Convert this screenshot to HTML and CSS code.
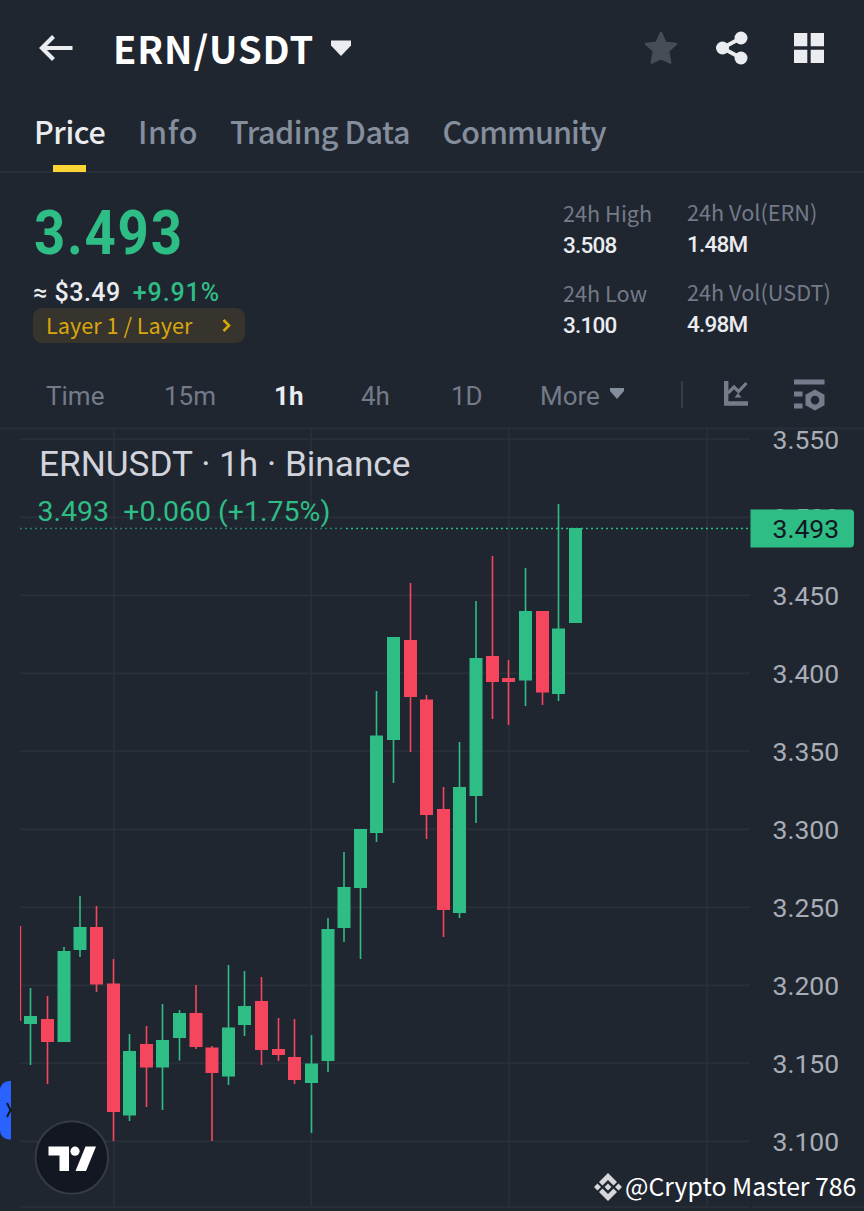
FILE: index.html
```html
<!DOCTYPE html>
<html lang="en">
<head>
  <meta charset="UTF-8">
  <title>ERN/USDT</title>
  <link rel="stylesheet" href="styles.css">
</head>
<body>
  <header class="topbar">
    <svg class="back" width="36" height="30" viewBox="0 0 36 30"><path d="M34.500 15H5M15.500 3.500L4 15l11.500 11.500" fill="none" stroke="#eaecef" stroke-width="4.200"/></svg>
    <h1 class="pair">ERN/USDT</h1>
    <svg class="caret" width="20" height="16" viewBox="0 0 20 16"><path d="M0 .5h20v5L10 16 0 5.500z" fill="#eaecef"/></svg>
    <div class="actions">
      <svg width="34" height="34" viewBox="0 0 34 34"><path d="M17 2l4.300 9.800 10.700 1.100-8 7.300 2.300 11.300L17 27l-9.300 4.500L10 20.200 2 12.900l10.700-1.100z" fill="#474d57" stroke="#474d57" stroke-width="2.500" stroke-linejoin="round"/></svg>
      <svg width="32" height="34" viewBox="0 0 32 34"><path d="M25 7L6.500 17 25 27" fill="none" stroke="#eaecef" stroke-width="4"/><circle cx="25" cy="7" r="6.500" fill="#eaecef"/><circle cx="6.500" cy="17" r="6.500" fill="#eaecef"/><circle cx="25" cy="27" r="6.500" fill="#eaecef"/></svg>
      <svg width="30" height="30" viewBox="0 0 30 30"><path d="M0 0h13.300v13.300H0zM16.700 0H30v13.300H16.700zM0 16.700h13.300V30H0zM16.700 16.700H30V30H16.700z" fill="#eaecef"/></svg>
    </div>
  </header>

  <nav class="tabs">
    <a class="tab active">Price</a>
    <a class="tab tab-info">Info</a>
    <a class="tab tab-data">Trading Data</a>
    <a class="tab tab-comm">Community</a>
  </nav>

  <section class="summary">
    <div class="quote">
      <div class="last">3.493</div>
      <div class="fiat"><span class="usd">≈ $3.49</span><span class="change">+9.91%</span></div>
      <div class="tag"><span>Layer 1 / Layer</span><svg width="9" height="13" viewBox="0 0 9 13"><path d="M1.500 1l5.500 5.500L1.500 12" fill="none" stroke="#d9a60c" stroke-width="2.600"/></svg></div>
    </div>
    <div class="stats">
      <div class="stat-col">
        <div class="label">24h High</div>
        <div class="value">3.508</div>
        <div class="label">24h Low</div>
        <div class="value">3.100</div>
      </div>
      <div class="stat-col right">
        <div class="label">24h Vol(ERN)</div>
        <div class="value">1.48M</div>
        <div class="label">24h Vol(USDT)</div>
        <div class="value">4.98M</div>
      </div>
    </div>
  </section>

  <nav class="intervals">
    <a class="iv-time">Time</a>
    <a class="iv-15m">15m</a>
    <a class="iv-1h active">1h</a>
    <a class="iv-4h">4h</a>
    <a class="iv-1d">1D</a>
    <a class="iv-more">More<svg width="14" height="11" viewBox="0 0 14 11"><path d="M0 0h14v3L7 11 0 3z" fill="#848e9c"/></svg></a>
    <i class="divider"></i>
    <svg class="ic-chart" width="24" height="25" viewBox="0 0 24 25"><path d="M2.200 0v22.500H24" fill="none" stroke="#767c8b" stroke-width="4.400"/><path d="M4 12l6-6 4.500 4.500L22.500 2" fill="none" stroke="#767c8b" stroke-width="3.200"/><path d="M14 12l3.500 4.500h-7z" fill="#767c8b"/></svg>
    <svg class="ic-set" width="31" height="32" viewBox="0 0 31 32"><path d="M0 .5h30.500v5H0zM0 12.500h8.500v5H0zM0 24.500h8.500v5H0z" fill="#767c8b"/><path d="M21 10.500l9.500 5.300v10.500L21 31.600l-9.500-5.300V15.800zm0 6.300a4.300 4.300 0 1 0 0 8.600 4.300 4.300 0 0 0 0-8.600z" fill="#767c8b" fill-rule="evenodd"/></svg>
  </nav>

  <main class="chart">
    <svg id="plot" width="864" height="783" viewBox="0 428 864 783">
      <g id="grid" class="grid"></g>
      <text class="symbol" x="39" y="475.500">ERNUSDT · 1h · Binance</text>
      <text class="legend" x="37.500" y="521" xml:space="preserve">3.493  +0.060 (+1.75%)</text>
      <path class="last-line dim" d="M20 528.500h325"/>
      <path class="last-line" d="M346 528.500h404"/>
      <g id="candles"></g>
      <g id="axis" class="axis"></g>
      <path d="M750.500 509.500H850a4 4 0 0 1 4 4v30a4 4 0 0 1-4 4H750.500z" fill="#2ebd85"/>
      <text class="axis-last" x="772.500" y="538">3.493</text>
      <path d="M11 1081v58.500H9a9 9 0 0 1-9-9v-40.500a9 9 0 0 1 9-9z" fill="#2962ff"/>
      <path d="M7 1103l3.500 7-3.500 7" fill="none" stroke="#131722" stroke-width="2"/>
      <circle cx="71.800" cy="1157.500" r="36.300" fill="#131722" stroke="#363a45" stroke-width="2"/>
      <path d="M48.500 1146.500H69v24.500h-9.500v-15.500h-11zM85.500 1146.500H96L86 1171H75.500z" fill="#fff"/>
      <circle cx="75" cy="1151.200" r="4.600" fill="#fff"/>
      <g class="badge" transform="translate(608 1187)">
        <path d="M0-14L9-5 5.500-1.500 0-7l-5.500 5.500L-9-5zM0 14L9 5 5.500 1.500 0 7l-5.500-5.500L-9 5zM0-3.500L3.500 0 0 3.500-3.500 0zM10.500-3.500L14 0l-3.500 3.500L7 0zM-10.500-3.500L-7 0l-3.500 3.500L-14 0z"/>
      </g>
      <text class="handle" x="625" y="1196">@Crypto Master 786</text>
    </svg>
  </main>
  <script src="chart.js"></script>
</body>
</html>
```
FILE: styles.css
```css
* {
  box-sizing: border-box;
}
body {
  margin: 0;
  width: 864px;
  height: 1211px;
  overflow: hidden;
  background-color: #202630;
  color: #eaecef;
  font-family: "Noto Sans CJK SC", "Noto Sans", sans-serif;
}
svg {
  display: block;
  flex: none;
}
.topbar {
  display: flex;
  align-items: center;
  height: 96px;
  padding: 0 40px 0 38px;
}
.pair {
  width: 201px;
  margin: 0 0 0 39px;
  font-size: 38px;
  line-height: 50px;
  font-weight: 700;
  letter-spacing: 0.9px;
  color: #fff;
  white-space: nowrap;
}
.caret {
  margin-left: 17px;
}
.actions {
  display: flex;
  align-items: center;
  margin-left: auto;
}
.actions svg:nth-child(2) {
  margin: 0 46px 0 38px;
}
.tabs {
  display: flex;
  height: 77px;
  padding-left: 34px;
  border-bottom: 2px solid #292f39;
}
.tab {
  position: relative;
  padding-top: 13px;
  font-size: 30.5px;
  line-height: 44px;
  letter-spacing: -0.4px;
  color: #848e9c;
  font-weight: 500;
  white-space: nowrap;
}
.tab.active {
  width: 104px;
  color: #eaecef;
}
.tab.active::after {
  content: "";
  position: absolute;
  left: 19px;
  bottom: -1px;
  width: 33px;
  height: 7px;
  background-color: #fcd535;
}
.tab-info {
  width: 92px;
  letter-spacing: 0.7px;
}
.tab-data { width: 212.5px; }
.tab-comm { letter-spacing: -0.9px; }

.summary {
  display: flex;
  height: 190px;
  padding-left: 33px;
}
.quote {
  width: 530px;
  font-family: Roboto, sans-serif;
}
.last {
  height: 100px;
  padding-top: 24px;
  padding-left: 1px;
  font-size: 62px;
  line-height: 72px;
  font-weight: 700;
  letter-spacing: 2px;
  color: #2ebd85;
  transform: scaleX(0.88);
  transform-origin: left;
}
.fiat {
  display: flex;
  gap: 12px;
  height: 35px;
  padding-top: 3px;
  font-size: 25px;
  line-height: 33px;
  letter-spacing: 0.5px;
  font-weight: 500;
}
.change {
  letter-spacing: 0.9px;
  color: #2ebd85;
}
.tag {
  display: flex;
  align-items: center;
  justify-content: space-between;
  width: 212px;
  height: 35px;
  padding: 0 14px 0 13px;
  border-radius: 9px;
  background-color: #36342c;
  color: #d9a60c;
  font-family: "Noto Sans CJK SC", sans-serif;
  font-size: 21.7px;
  white-space: nowrap;
}
.tag span {
  padding-bottom: 3px;
}
.stats {
  display: flex;
  padding-top: 26px;
}
.stat-col {
  width: 124px;
  white-space: nowrap;
}
.stat-col.right {
  margin-top: -1px;
}
.label {
  height: 31px;
  font-size: 21.7px;
  line-height: 27px;
  color: #747a88;
}
.value {
  height: 49px;
  padding-top: 1px;
  font-family: Roboto, sans-serif;
  font-size: 22.5px;
  line-height: 29px;
  letter-spacing: -0.8px;
  font-weight: 500;
}
.intervals {
  display: flex;
  height: 67px;
  padding-left: 46px;
  border-bottom: 3px solid #262c36;
  font-family: Roboto, sans-serif;
  font-size: 26px;
  line-height: 66px;
  color: #747a88;
}
.intervals .active {
  color: #eaecef;
  font-weight: 700;
}
.iv-time { width: 118px; }
.iv-15m { width: 110px; }
.iv-1h { width: 87px; }
.iv-4h { width: 90px; }
.iv-1d { width: 89px; }
.iv-more {
  display: flex;
  width: 141px;
}
.iv-more svg {
  margin: 25px 0 0 10px;
}
.divider {
  width: 2px;
  height: 27px;
  margin-top: 18px;
  background-color: #363c47;
}
.ic-chart {
  margin: 18px 0 0 41px;
}
.ic-set {
  margin: 16px 0 0 46px;
}
.chart {
  margin-top: -2px;
  font-family: Roboto, sans-serif;
}
.grid {
  stroke: #2a303a;
  stroke-width: 1.7;
}
.symbol {
  font-size: 35.2px;
  fill: #d1d4dc;
}
.legend {
  font-size: 28.5px;
  fill: #2ebd85;
}
.last-line {
  stroke: #2ebd85;
  stroke-width: 1.5;
  stroke-dasharray: 2 3;
}
.dim {
  opacity: 0.6;
}
.axis {
  font-size: 26.5px;
  fill: #a9adb8;
}
.axis-last {
  font-size: 26.5px;
  fill: #131722;
}
.up {
  fill: #2ebd85;
}
.down {
  fill: #f6465d;
}
.badge {
  fill: #d6d7d9;
}
.handle {
  font-family: "Noto Sans CJK SC", sans-serif;
  font-size: 24.8px;
  fill: #fff;
}
```
FILE: chart.js
```js
// x centre, high, low, body top, body bottom, direction
const candles = [
  [30.5, 988, 1065, 1016, 1024, 'up'],
  [47.5, 996, 1084, 1019, 1042, 'down'],
  [64, 947, 1042, 951, 1042, 'up'],
  [80, 896, 957, 927, 950, 'up'],
  [96.5, 906, 992, 927, 984.5, 'down'],
  [113.5, 959, 1141, 983.5, 1112, 'down'],
  [129.5, 1034, 1121, 1051, 1115.5, 'up'],
  [146.5, 1026, 1107, 1044, 1067.5, 'down'],
  [162.5, 1004, 1110, 1040, 1067.5, 'up'],
  [179.5, 1010, 1060.5, 1013, 1038, 'up'],
  [196, 985, 1049, 1013, 1047, 'down'],
  [212, 1046, 1141, 1047.5, 1073, 'down'],
  [228.5, 965, 1085, 1027.5, 1076.5, 'up'],
  [244.5, 971, 1036, 1006, 1025, 'up'],
  [261.5, 977, 1065, 1001, 1050, 'down'],
  [278.5, 1018, 1061, 1049, 1055, 'down'],
  [294.5, 1019, 1084, 1057, 1080, 'down'],
  [311.5, 1035, 1133, 1063.5, 1083, 'up'],
  [328, 918, 1072, 929, 1061, 'up'],
  [344, 852, 942, 887, 928, 'up'],
  [360.5, 829, 959, 829, 888, 'up'],
  [376.5, 691, 842, 735.5, 833, 'up'],
  [393.5, 637, 783, 637, 740, 'up'],
  [410.5, 583, 752, 640, 697, 'down'],
  [426.5, 695, 839, 699.5, 815, 'down'],
  [443.5, 787, 937, 809, 910, 'down'],
  [459.5, 742, 918, 787, 913, 'up'],
  [476, 601, 823, 658, 796, 'up'],
  [492.5, 556, 719, 656, 682, 'down'],
  [508.5, 660, 725, 678, 682, 'down'],
  [525.5, 568, 706, 611, 680.5, 'up'],
  [542.5, 611, 705, 611, 692.5, 'down'],
  [558.5, 504, 701, 628.5, 694, 'up'],
  [575.5, 528, 623, 528, 623, 'up']
];

function rect(x, y, w, h, cls) {
  return `<rect x="${x}" y="${y}" width="${w}" height="${h}" class="${cls}"/>`;
}

let bars = rect(20, 926, 1.2, 95, 'down');
for (const [x, high, low, top, bottom, dir] of candles) {
  bars += rect(x - 0.8, high, 1.6, low - high, dir);
  bars += rect(x - 6.5, top, 13, bottom - top, dir);
}
document.getElementById('candles').innerHTML = bars;

let lines = '';
let labels = '';
for (let i = 0; i < 10; i++) {
  const y = 439.3 + i * 78;
  lines += `<path d="M20 ${y}H750"/>`;
  labels += `<text x="772.5" y="${y + 9.2}">${(3.55 - i * 0.05).toFixed(3)}</text>`;
}
for (const x of [114, 311, 509, 707]) {
  lines += `<path d="M${x} 428V1206"/>`;
}
lines += '<path d="M20 1207H750M752 1207H864"/>';
document.getElementById('grid').innerHTML = lines;
document.getElementById('axis').innerHTML = labels;
```
